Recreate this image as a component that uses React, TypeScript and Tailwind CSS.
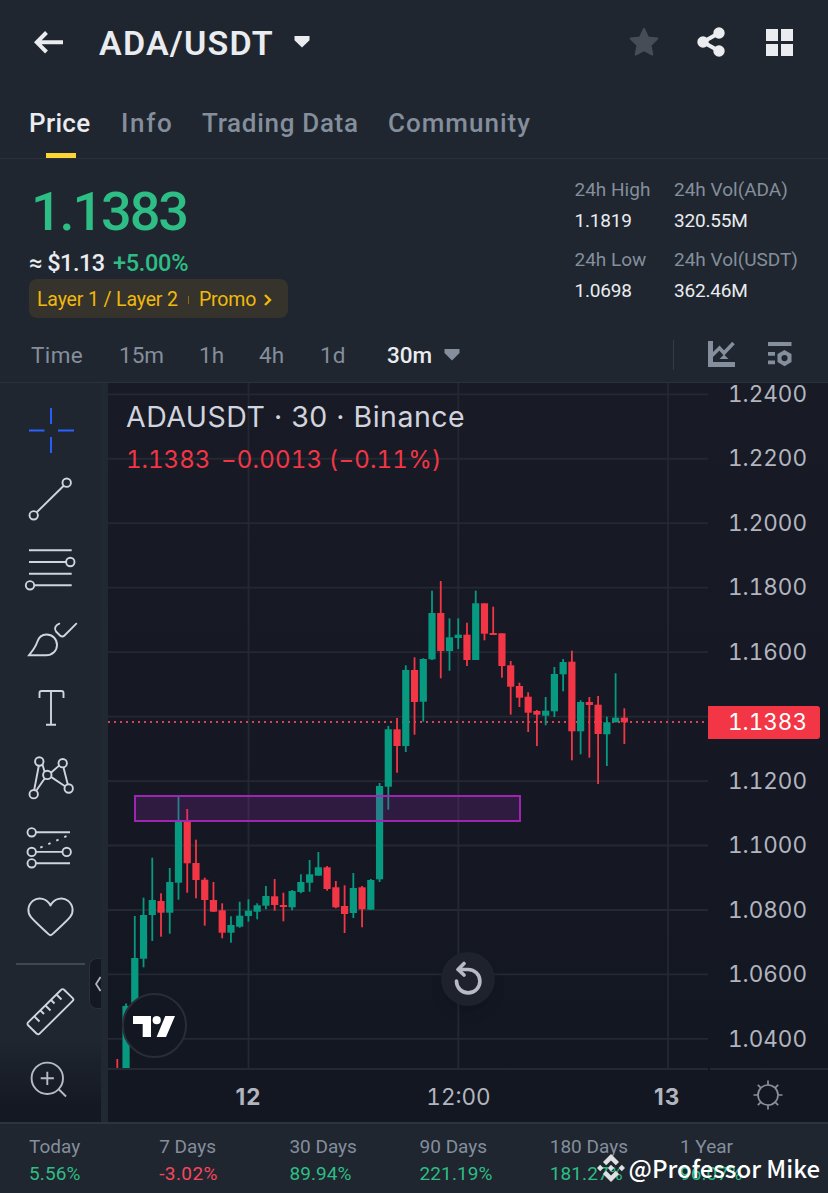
import React from "react";

type Candle = {
  up: boolean;
  high: number;
  top: number;
  bottom: number;
  low: number;
};

const c = (dir: "u" | "d", high: number, top: number, bottom: number, low: number): Candle => ({
  up: dir === "u",
  high,
  top,
  bottom,
  low,
});

// 30m candles, values are y positions on the pane
const candles: Candle[] = [
  c("d", 676, 690, 700, 700),
  c("u", 620.5, 623, 690, 690),
  c("u", 533, 575, 623, 623),
  c("u", 514.7, 532, 575.7, 584.3),
  c("u", 474.7, 517, 532, 558),
  c("d", 510.3, 518, 529.7, 553.7),
  c("u", 485, 499, 529.7, 550.7),
  c("u", 413.7, 437.7, 499.7, 516.7),
  c("d", 426, 437.7, 480.3, 509.7),
  c("d", 456.7, 480, 497, 515.3),
  c("d", 494.7, 496.7, 517, 542.7),
  c("d", 499, 517, 528.7, 529),
  c("d", 520.3, 527.3, 549.7, 555.3),
  c("u", 533.3, 542, 549.7, 559.7),
  c("u", 518.7, 532.7, 543.7, 544.7),
  c("u", 516.3, 527.7, 533, 538.7),
  c("u", 520.3, 522.3, 528.7, 536.3),
  c("u", 503, 513, 522.7, 526.3),
  c("d", 496, 513.3, 522, 527.7),
  c("d", 509.7, 522, 524, 538.3),
  c("u", 507, 508, 524.3, 527.3),
  c("u", 491.3, 499, 509, 510.3),
  c("u", 477, 491.3, 499.7, 508.7),
  c("u", 469, 484.3, 492.7, 492.7),
  c("d", 483, 484.3, 506, 507.7),
  c("d", 498, 504.3, 524.3, 525.3),
  c("d", 502.3, 523, 531, 550),
  c("u", 490, 505, 530, 535),
  c("d", 503, 504.3, 526.3, 544.3),
  c("u", 496, 497, 526.7, 526.7),
  c("u", 400, 403, 496.3, 499),
  c("u", 343, 346.3, 403.7, 426.7),
  c("d", 335, 346.3, 363, 389.7),
  c("u", 282.3, 287, 363, 369),
  c("d", 274.3, 287, 319, 351.7),
  c("u", 275.3, 276, 318.7, 338.7),
  c("u", 207.7, 230, 276.3, 277),
  c("d", 198, 230, 268, 295.3),
  c("u", 235.3, 254.3, 268, 287.7),
  c("u", 235.3, 251.7, 255, 266),
  c("d", 239.7, 251.7, 277, 283),
  c("u", 207.7, 220.3, 277, 277),
  c("d", 220.3, 220.3, 250.7, 257.3),
  c("d", 223.7, 250, 252, 252),
  c("d", 250.3, 250.3, 283, 294.7),
  c("d", 278, 282.3, 303.7, 331.7),
  c("d", 299.7, 303, 314.7, 324),
  c("d", 309.3, 313.7, 329.7, 349),
  c("d", 327, 328, 331.7, 363),
  c("u", 314, 327.7, 332.7, 342.3),
  c("u", 284, 291, 328.3, 334),
  c("u", 276, 279, 291.3, 308.3),
  c("d", 267.7, 278.7, 348.3, 377.3),
  c("u", 317.3, 319, 348.3, 371.3),
  c("d", 314, 319, 322, 374.7),
  c("d", 313, 321.7, 351, 401),
  c("u", 333.7, 339.3, 351.3, 383),
  c("u", 290.3, 334.7, 339.3, 339.3),
  c("d", 325.3, 334.7, 339.3, 361),
];

const priceLabels = [
  "1.2400", "1.2200", "1.2000", "1.1800", "1.1600", "", "1.1200", "1.1000", "1.0800", "1.0600", "1.0400",
];

const stats = [
  { label: "24h High", value: "1.1819" },
  { label: "24h Vol(ADA)", value: "320.55M" },
  { label: "24h Low", value: "1.0698" },
  { label: "24h Vol(USDT)", value: "362.46M" },
];

const periods = [
  { label: "Today", value: "5.56%" },
  { label: "7 Days", value: "-3.02%" },
  { label: "30 Days", value: "89.94%" },
  { label: "90 Days", value: "221.19%" },
  { label: "180 Days", value: "181.27%" },
  { label: "1 Year", value: "96.07%" },
];

const Header: React.FC = () => (
  <header className="flex h-[86px] items-center pl-[34px] pr-[35px] text-[#eaecef]">
    <svg className="h-6 w-[30px]" viewBox="0 0 30 24" fill="none" stroke="currentColor" strokeWidth="4">
      <path d="M29 11.3H3M12.5 1.5 2.8 11.3l9.7 9.7" />
    </svg>
    <h1 className="ml-[35px] w-[176px] text-[34px] leading-none font-semibold tracking-[1.2px]">ADA/USDT</h1>
    <svg className="mb-[2px] ml-[19px] h-3 w-4" viewBox="0 0 16 12" fill="currentColor">
      <path d="M.5 0h15v4.200L8 11.500.5 4.200Z" />
    </svg>
    <div className="ml-auto flex items-center gap-[38px]">
      <svg className="mb-[2px] h-[30px] w-[30px] text-[#474d57]" viewBox="0 0 30 30">
        <path
          d="m15 1.800 4 8.700 9.300 1.100-6.800 6.600 1.800 9.300L15 23l-8.300 4.500 1.800-9.300-6.800-6.600L11 10.500Z"
          fill="currentColor"
          stroke="currentColor"
          strokeWidth="2"
          strokeLinejoin="round"
        />
      </svg>
      <svg className="mb-[2px] h-[30px] w-[28px]" viewBox="0 0 28 30" fill="currentColor">
        <path d="M22 6 6 15l16 9" fill="none" stroke="currentColor" strokeWidth="4" />
        <circle cx="22" cy="6" r="5.700" />
        <circle cx="6" cy="15" r="5.700" />
        <circle cx="22" cy="24" r="5.700" />
      </svg>
      <div className="mb-[1px] ml-[3px] grid grid-cols-2 gap-[3px]">
        <span className="h-3 w-3 bg-current" />
        <span className="h-3 w-3 bg-current" />
        <span className="h-3 w-3 bg-current" />
        <span className="h-3 w-3 bg-current" />
      </div>
    </div>
  </header>
);

const Tabs: React.FC = () => (
  <nav className="flex h-[73px] border-b border-[#2b3139] pl-[29px] text-[26px] font-medium text-[#848e9c]">
    <div className="flex w-[63px] flex-col items-center text-[#eaecef]">
      <span className="h-[67px] w-full pt-[17px] leading-[40px] tracking-[0.3px]">Price</span>
      <span className="h-[5px] w-[30px] shrink-0 bg-[#fcd535]" />
    </div>
    <span className="ml-[29px] w-[51px] pt-[17px] leading-[40px] tracking-[1.7px]">Info</span>
    <span className="ml-[30px] w-[157px] pt-[17px] leading-[40px] tracking-[0.7px] whitespace-nowrap">Trading Data</span>
    <span className="ml-[29px] pt-[17px] leading-[40px] tracking-[1px]">Community</span>
  </nav>
);

const Ticker: React.FC = () => (
  <section className="flex h-[168px] justify-between">
    <div className="pl-[29px] pt-[24px]">
      <div className="ml-[2px] text-[54px] leading-[58px] font-medium tracking-[-2.1px] text-[#2ebd85]">1.1383</div>
      <div className="mt-[7px] flex h-[31px] items-center text-[23.5px] font-medium">
        <span className="w-[84px] tracking-[-0.5px] text-[#eaecef]">≈ $1.13</span>
        <span className="tracking-[-0.3px] text-[#2ebd85]">+5.00%</span>
      </div>
      <div className="flex h-[39px] w-[259px] items-center rounded-lg bg-[#35332b] pt-[2px] pl-2 text-[19.5px] text-[#f0b90b]">
        <span className="w-[142px] tracking-[-0.15px] whitespace-nowrap">Layer 1 / Layer 2</span>
        <span className="ml-[9px] h-2 w-px bg-[#8c6e10]" />
        <span className="ml-[10px] w-[57px] tracking-[-0.2px]">Promo</span>
        <svg className="ml-[8px] h-3 w-2" viewBox="0 0 8 12" fill="none" stroke="currentColor" strokeWidth="2.400">
          <path d="m1 1 5 5-5 5" />
        </svg>
      </div>
    </div>
    <div className="grid w-[253.5px] grid-cols-[99.5px_1fr] content-start gap-y-[9px] pt-[15px] text-[19px]">
      {stats.map((s) => (
        <div key={s.label} className="whitespace-nowrap">
          <div className="h-[31px] leading-[31px] text-[#848e9c]">{s.label}</div>
          <div className="h-[30px] leading-[31px] tracking-[-0.2px] text-[#eaecef]">{s.value}</div>
        </div>
      ))}
    </div>
  </section>
);

const Intervals: React.FC = () => (
  <div className="flex h-[56px] items-center border-b border-[#2b3139] pt-[2px] pl-[31px] text-[22.5px] text-[#848e9c]">
    <span className="w-[88px] tracking-[0.4px]">Time</span>
    <span className="w-[80px]">15m</span>
    <span className="w-[60px]">1h</span>
    <span className="w-[61px]">4h</span>
    <span className="w-[67px]">1d</span>
    <span className="w-[57px] font-medium text-[#eaecef]">30m</span>
    <svg className="mb-[2px] h-3 w-4" viewBox="0 0 16 12" fill="currentColor">
      <path d="M.5 0h15v4L8 11.500.5 4Z" />
    </svg>
    <span className="mb-[2px] ml-[213px] h-[30px] w-px bg-[#333b47]" />
    <svg className="mb-[3px] ml-[34px] h-[26px] w-[27px]" viewBox="0 0 27 26" fill="none" stroke="currentColor">
      <path d="M2.500 0v23.500H27" strokeWidth="5" />
      <path d="m4 14.500 7.500-7.500 4.500 5L25.500 2" strokeWidth="3.600" />
      <path d="M11.500 18 16 13.500l4.500 4.500Z" fill="currentColor" stroke="none" />
    </svg>
    <svg className="mb-[3px] ml-[33px] h-[26px] w-6" viewBox="0 0 24 26" fill="currentColor">
      <path d="M0 1h23.500v4H0ZM0 11h7v3.800H0ZM0 19.500h7v3.800H0Z" />
      <path
        fillRule="evenodd"
        d="m16.500 9 7 4v8l-7 4.200-7-4.200v-8Zm0 5a3.100 3.100 0 1 0 0 6.200 3.100 3.100 0 0 0 0-6.200Z"
      />
    </svg>
  </div>
);

const Tool: React.FC<{ children: React.ReactNode; className?: string }> = ({ children, className }) => (
  <div className="flex h-[69.6px] shrink-0 items-center">
    <svg
      className={className ?? "ml-[23.700px] h-[52px] w-[52px] overflow-visible text-[#d1d4dc]"}
      viewBox="0 0 52 52"
      fill="none"
      stroke="currentColor"
      strokeWidth="1.900"
    >
      {children}
    </svg>
  </div>
);

const Toolbar: React.FC = () => (
  <aside className="relative flex w-[101px] flex-col bg-linear-to-b from-[#1f262f] from-89% to-[#141823] to-98% pt-[12px]">
    <Tool className="ml-6 h-[52px] w-[52px] overflow-visible text-[#2962ff]">
      <path d="M27 4v16M27 33v16M5 26.500h15.500M34 26.500h16" />
    </Tool>
    <Tool>
      <circle cx="42.700" cy="9.700" r="4.200" />
      <circle cx="9.700" cy="42.300" r="4.200" />
      <path d="M39.700 12.700 12.700 39.300" />
    </Tool>
    <Tool>
      <path d="M5 7.300h42.700M5 19h37M5 30.700h42.700M10.500 42.300h37.200" />
      <circle cx="46.300" cy="19" r="4.200" />
      <circle cx="6" cy="42.300" r="4.200" />
    </Tool>
    <Tool>
      <path d="M5 42.300h17c6.500 0 11-4.600 11-10.300 0-6-4.500-10.500-10.500-10.500-5 0-8 3.500-9.300 7.500C11.700 34 8 38.500 5 42.300Z" />
      <path d="M35.300 10.700c-4 1.800-5.500 5-3.300 7.800l4 4c1.500 1.300 3.200 1.300 4.500 0l11.800-11.800" strokeLinecap="round" />
    </Tool>
    <Tool>
      <path d="M15.500 16v-5c0-1.300.7-2 2-2h20c1.300 0 2 .7 2 2v5M27 9v33.700M22 42.700h10" />
    </Tool>
    <Tool>
      <g transform="translate(0 -0.8)">
        <path d="m14.800 14.500-4.600 24.300M18.500 13.200l2 7M20.800 27l-8.600 12.600M26.900 21.500l8.500-7.300M39.500 16.200l4.300 17M27 25.700l14 9.300" />
        <circle cx="15.300" cy="10.300" r="4.200" />
        <circle cx="38.700" cy="12" r="4.200" />
        <circle cx="23.300" cy="23.700" r="4.200" />
        <circle cx="9.700" cy="43" r="4.200" />
        <circle cx="44.700" cy="37.300" r="4.200" />
      </g>
    </Tool>
    <Tool>
      <g transform="translate(0 0.6)">
        <circle cx="7.700" cy="10.700" r="4.200" />
        <circle cx="7.700" cy="30.300" r="4.200" />
        <circle cx="42.700" cy="30.300" r="4.200" />
        <circle cx="7.700" cy="41.700" r="4.200" />
        <path d="M12 10.700h34M12 30.300h26.500M12 41.700h34" />
        <path d="m16.300 26 27-11.700" strokeDasharray="2.500 6.200" />
      </g>
    </Tool>
    <Tool>
      <path
        d="M26.500 14.500C23 7.500 14.500 5.500 9 9.800 3.500 14.300 3 21.300 7 26.200c4 4.800 11 10.800 17.800 17.200 1.200 1.100 2.200 1.100 3.400 0C35 37 42 31 46 26.200c4-4.900 3.500-11.900-2-16.400C38.500 5.500 30 7.500 26.500 14.500Z"
        strokeLinejoin="round"
      />
    </Tool>
    <div className="mt-[11.500px] ml-4 h-[2px] w-[69px] shrink-0 bg-[#434651]" />
    <div className="mt-[12px]">
      <Tool>
        <path
          d="M37.200 3.700a2 2 0 0 1 2.900 0l8.600 8.400a2 2 0 0 1 0 2.800L15.600 47.700a2 2 0 0 1-2.900 0l-8.600-8.400a2 2 0 0 1 0-2.900Z"
          strokeLinejoin="round"
        />
        <path d="m10.500 30.500 5 5M16.500 24.500l3.500 3.500M21.500 19.500l5 5M27 14l3.500 3.500M32.500 8.500l5 5" />
      </Tool>
    </div>
    <div className="-mt-[1.500px]">
      <Tool className="ml-6 h-[52px] w-[52px] overflow-visible text-[#b8bbc4]">
        <circle cx="23.300" cy="24.300" r="15.700" />
        <path d="M23.300 17.700v13.200M16.700 24.300h13.200M35 35.500l7 7" />
      </Tool>
    </div>
    {/* collapse handle */}
    <div className="absolute top-[575px] right-0 flex h-[51px] w-[12px] items-center justify-end rounded-l-lg border border-r-0 border-[#2b2f3a] bg-[#141823]">
      <svg className="h-4 w-[6px]" viewBox="0 0 6 16" fill="none" stroke="#b2b5be" strokeWidth="1.800">
        <path d="M5.500 1 1 8l4.500 7" />
      </svg>
    </div>
  </aside>
);

const Pane: React.FC = () => {
  const gridY = priceLabels.map((_, i) => 11.3 + i * 64.46);
  return (
    <div className="relative h-[685px] w-[600px] bg-linear-to-b from-[#181a26] to-[#131722]">
      <svg className="block h-[685px] w-[600px]" viewBox="0 0 600 685">
        <g stroke="#242832" strokeWidth="1.800">
          {gridY.map((y) => (
            <line key={y} x1="0" x2="600" y1={y} y2={y} />
          ))}
          {[140.5, 350.3, 560].map((x) => (
            <line key={x} x1={x} x2={x} y1="0" y2="685" />
          ))}
        </g>
        <line x1="0" x2="600" y1="339" y2="339" stroke="#d9434f" strokeWidth="1.800" strokeDasharray="2 4" />
        {candles.map((k, i) => {
          const x = 9.3 + i * 8.742;
          const color = k.up ? "#089981" : "#f23645";
          return (
            <g key={i} fill={color}>
              <rect x={x - 0.9} y={k.high} width="1.800" height={k.low - k.high} />
              {k.top < 685 && <rect x={x - 3.6} y={k.top} width="7.200" height={k.bottom - k.top} />}
            </g>
          );
        })}
        <rect x="27" y="413" width="385" height="25" fill="#9c27b0" fillOpacity="0.2" stroke="#a426b8" strokeWidth="1.900" />
      </svg>

      <div className="absolute top-[13px] left-[18px] font-['Inter',sans-serif] whitespace-nowrap">
        <div className="text-[28.500px] leading-[41px] tracking-[0.5px] text-[#d1d4dc]">ADAUSDT · 30 · Binance</div>
        <div className="mt-[4px] flex text-[24px] leading-[38px] text-[#f23645] tabular-nums">
          <span className="w-[95px]">1.1383</span>
          <span className="tracking-[0.2px]">−0.0013 (−0.11%)</span>
        </div>
      </div>

      <div className="absolute top-[610px] left-[14px] h-[65px] w-[65px] rounded-full border-2 border-[#2a2d38] bg-[#131722]">
        <svg className="mt-[21px] ml-[9px] h-[21px] w-[42px]" viewBox="0 0 42 21" fill="#fff">
          <path d="M0 0h18v21H9.700V8H0ZM32.300 0H42l-9 21h-9.400Z" />
          <circle cx="23.700" cy="4.200" r="4.100" />
        </svg>
      </div>

      <div className="absolute top-[569px] left-[333px] flex h-[54px] w-[54px] items-center justify-center rounded-full bg-[#1e222d] pb-[2px] shadow-lg">
        <svg
          className="h-[34px] w-[30px]"
          viewBox="0 0 30 34"
          fill="none"
          stroke="#b8bac6"
          strokeWidth="3.600"
          strokeLinecap="round"
          strokeLinejoin="round"
        >
          <path d="M3.500 20A11.700 11.700 0 1 0 15 8.500H5M11 2.500 5 8.500l6 5.500" />
        </svg>
      </div>
    </div>
  );
};

const Chart: React.FC = () => (
  <section className="flex h-[739px] bg-[#131722]">
    <Toolbar />
    <div className="w-[7px] bg-[#222831]" />
    <div className="flex w-[720px] flex-col font-['Inter',sans-serif]">
      <div className="flex h-[685px]">
        <Pane />
        <div className="relative w-[120px] bg-linear-to-b from-[#181a26] to-[#131722] text-[22.500px] tabular-nums">
          <div className="pl-[20px] text-[#b2b5be]">
            {priceLabels.map((p, i) => (
              <div key={i} className="mb-[41.46px] h-[23px] leading-[22px]">
                {p}
              </div>
            ))}
          </div>
          <div className="absolute top-[323px] left-0 h-[33px] w-[112px] rounded-r-[3px] bg-[#f23645] pl-[20px] leading-[32px] text-white">
            1.1383
          </div>
        </div>
      </div>
      <div className="flex flex-1 gap-[2px] text-[22.5px] text-[#b2b5be]">
        <div className="flex w-[600px] items-center border-t-2 border-[#242832] pt-px">
          <span className="w-[281px] shrink-0 text-center font-bold tracking-[1px]">12</span>
          <span className="w-[139px] shrink-0 text-center tabular-nums">12:00</span>
          <span className="w-[180px] shrink-0 pl-[126px] font-bold tracking-[1px]">13</span>
        </div>
        <div className="flex flex-1 items-center border-t-2 border-[#242832] pb-[2px] pl-[43px]">
          <svg className="h-[30px] w-[30px]" viewBox="0 0 30 30" fill="none" stroke="#8c8f99" strokeWidth="1.700">
            <circle cx="15" cy="15" r="10" />
            <path d="M15 .5V5M15 25v4.500M.5 15H5M25 15h4.500M4.800 4.800l3.100 3.100M22.100 22.100l3.100 3.100M4.800 25.200l3.100-3.100M22.100 7.900l3.100-3.100" />
          </svg>
        </div>
      </div>
    </div>
  </section>
);

const Watermark: React.FC = () => (
  <div className="absolute right-[8px] bottom-[2px] flex h-[46px] items-center">
    <svg className="h-7 w-7" viewBox="0 0 28 28" fill="#dfe1e4">
      <path d="m14 0 8 8-3.200 3.200L14 6.400l-4.800 4.800L6 8ZM14 28l8-8-3.200-3.200-4.800 4.800-4.800-4.800L6 20ZM14 10.800l3.200 3.200-3.200 3.200-3.200-3.200ZM3.200 10.800 6.400 14l-3.200 3.200L0 14ZM24.800 10.800 28 14l-3.200 3.200-3.200-3.200Z" />
    </svg>
    <span className="ml-1 font-['Noto_Sans_CJK_SC',sans-serif] text-[24px] leading-[46px] font-medium whitespace-nowrap text-white">
      @Professor Mike
    </span>
  </div>
);

const Performance: React.FC = () => (
  <footer className="relative flex h-[71px] border-t-2 border-[#2e343e] pt-[9px] pl-[29px] text-[19px]">
    {periods.map((p) => (
      <div key={p.label} className="w-[130.2px] shrink-0 whitespace-nowrap">
        <div className="leading-[27px] text-[#848e9c]">{p.label}</div>
        <div
          className={
            p.value.startsWith("-")
              ? "leading-[27px] tracking-[0.4px] text-[#f6465d]"
              : "leading-[27px] tracking-[0.1px] text-[#2ebd85]"
          }
        >
          {p.value}
        </div>
      </div>
    ))}
    <Watermark />
  </footer>
);

const App: React.FC = () => {
  return (
    <main className="h-[1193px] w-[828px] overflow-hidden bg-[#1f262f] font-['Roboto',sans-serif]">
      <Header />
      <Tabs />
      <Ticker />
      <Intervals />
      <Chart />
      <Performance />
    </main>
  );
};

export default App;
